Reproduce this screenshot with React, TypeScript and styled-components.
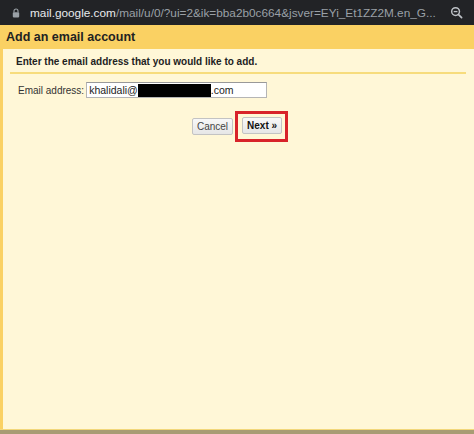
import styled, { createGlobalStyle } from 'styled-components'

const GlobalStyle = createGlobalStyle`
  html, body {
    margin: 0;
    padding: 0;
    background: #fff7d7;
  }
`

const App = () => {
  return (
    <Page>
      <GlobalStyle />
      <AddressBar>
        <Lock viewBox="0 0 10 12">
          <path d="M2.5 5V3.5a2.5 2.5 0 0 1 5 0V5" fill="none" stroke="#9aa0a6" strokeWidth="1.4" />
          <rect x="1" y="5" width="8" height="6.5" rx="1" fill="#9aa0a6" />
        </Lock>
        <Url>
          <Host>mail.google.com</Host>/mail/u/0/?ui=2&amp;ik=bba2b0c664&amp;jsver=EYi_Et1ZZ2M.en_G...
        </Url>
        <SearchIcon viewBox="0 0 14 14">
          <circle cx="6" cy="6" r="4.2" fill="none" stroke="#bdc1c6" strokeWidth="1.6" />
          <path d="M4 6h4" stroke="#bdc1c6" strokeWidth="1.4" />
          <path d="M9.2 9.2L12.5 12.5" stroke="#bdc1c6" strokeWidth="1.8" strokeLinecap="round" />
        </SearchIcon>
      </AddressBar>
      <Header>Add an email account</Header>
      <Body>
        <Instruction>Enter the email address that you would like to add.</Instruction>
        <FieldRow>
          <Label>Email address:</Label>
          <Input>
            khalidali@<Redacted />.com
          </Input>
        </FieldRow>
        <ButtonRow>
          <Button>Cancel</Button>
          <Highlight>
            <Button $primary>Next »</Button>
          </Highlight>
        </ButtonRow>
      </Body>
      <BottomEdge />
    </Page>
  )
}

const Page = styled.div`
  width: 474px;
  height: 434px;
  display: flex;
  flex-direction: column;
  font-family: "Liberation Sans", Arial, sans-serif;
  overflow: hidden;
`

const AddressBar = styled.div`
  height: 25px;
  flex-shrink: 0;
  background: #222326;
  display: flex;
  align-items: center;
  padding: 0 11px 0 12px;
  gap: 10px;
`

const Lock = styled.svg`
  width: 8px;
  height: 10px;
  flex-shrink: 0;
`

const Url = styled.div`
  flex: 1;
  color: #9aa0a6;
  font-family: "Liberation Sans", Arial, sans-serif;
  font-size: 11.8px;
  white-space: nowrap;
  overflow: hidden;
`

const Host = styled.span`
  color: #e8eaed;
`

const SearchIcon = styled.svg`
  width: 13px;
  height: 13px;
  flex-shrink: 0;
`

const Header = styled.div`
  height: 24px;
  flex-shrink: 0;
  background: #fad163;
  color: #222;
  font-size: 12.5px;
  font-weight: bold;
  display: flex;
  align-items: center;
  padding-left: 6px;
`

const Body = styled.div`
  flex: 1;
  background: #fff7d7;
  border-left: 3px solid #fad163;
  padding: 4px 8px 0 7px;
  display: flex;
  flex-direction: column;
`

const Instruction = styled.div`
  font-size: 10px;
  font-weight: bold;
  color: #222;
  padding: 3px 0 5px 6px;
  border-bottom: 2px solid #f7dc7c;
`

const FieldRow = styled.div`
  display: flex;
  align-items: center;
  gap: 2px;
  padding: 8px 0 0 8px;
`

const Label = styled.span`
  font-size: 10px;
  color: #333;
`

const Input = styled.div`
  width: 177px;
  height: 14px;
  background: #fff;
  border: 1px solid #b5b5b5;
  border-top-color: #999;
  padding: 0 0 0 2px;
  font-size: 10.5px;
  color: #222;
  display: flex;
  align-items: center;
`

const Redacted = styled.span`
  display: inline-block;
  width: 73px;
  height: 13px;
  background: #000;
`

const ButtonRow = styled.div`
  display: flex;
  justify-content: center;
  align-items: center;
  gap: 2px;
  padding: 13px 0 0 4px;
`

const Button = styled.button<{ $primary?: boolean }>`
  height: 17px;
  padding: 0 4px;
  font-family: "Liberation Sans", Arial, sans-serif;
  font-size: 10px;
  font-weight: ${(props) => (props.$primary ? 'bold' : 'normal')};
  color: ${(props) => (props.$primary ? '#111' : '#444')};
  background: linear-gradient(#f8f8f8, #e6e6e6);
  border: 1px solid #c3c3c3;
  border-radius: 2px;
  line-height: 15px;
`

const Highlight = styled.span`
  display: flex;
  padding: 3px 3px 5px 4px;
  border: 3px solid #d8232a;
`

const BottomEdge = styled.div`
  height: 4px;
  flex-shrink: 0;
  background: #a89c74;
  border-top: 1px solid #f2d77a;
`

export default App
